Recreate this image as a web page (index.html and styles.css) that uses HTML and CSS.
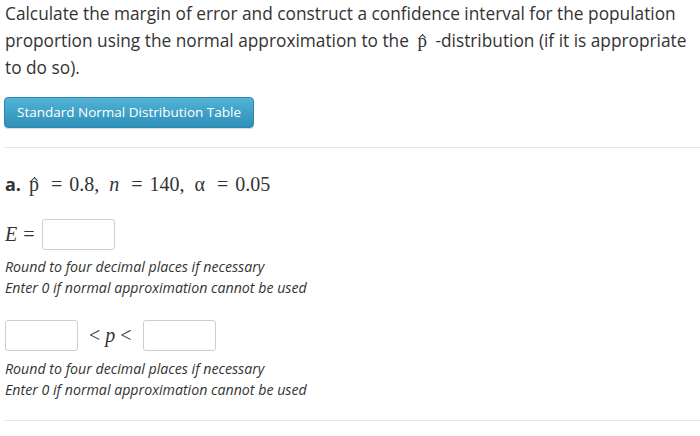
FILE: index.html
```html
<!DOCTYPE html>
<html>
<head>
<meta charset="utf-8">
<link rel="stylesheet" href="styles.css">
</head>
<body>
<div class="page">
  <p class="intro">Calculate the margin of error and construct a confidence interval for the population proportion using the normal approximation to the <span class="math phat"><span class="hat">p</span></span> -distribution (if it is appropriate to do so).</p>
  <div class="btn-row"><button class="btn">Standard Normal Distribution Table</button></div>
  <div class="section">
    <div class="given"><b class="label">a.</b><span class="math expr"><span class="hat">p</span><span class="eq">=</span>0.8,<span class="sp"></span><i>n</i><span class="eq">=</span>140,<span class="sp"></span><span class="sym">α</span><span class="eq">=</span>0.05</span></div>
    <div class="answer-row first">
      <span class="math"><i>E</i><span class="eq small">=</span></span>
      <span class="box"></span>
    </div>
    <div class="hint">Round to four decimal places if necessary<br>Enter 0 if normal approximation cannot be used</div>
    <div class="answer-row second">
      <span class="box"></span>
      <span class="math ineq">&lt;<i class="pv">p</i>&lt;</span>
      <span class="box"></span>
    </div>
    <div class="hint">Round to four decimal places if necessary<br>Enter 0 if normal approximation cannot be used</div>
  </div>
</div>
</body>
</html>
```

FILE: styles.css
```css
html, body {
  margin: 0;
  padding: 0;
  background: #ffffff;
}
.page {
  font-family: "Open Sans", "Noto Sans", sans-serif;
  color: #333333;
  padding-left: 5px;
}
.intro {
  margin: 0;
  font-size: 17.3px;
  line-height: 27px;
}
.math {
  font-family: "Liberation Serif", "DejaVu Serif", serif;
  font-size: 20px;
  color: #333333;
}
.phat {
  margin: 0 4px;
  font-size: 19px;
  line-height: 1;
}
.hat {
  position: relative;
  display: inline-block;
  line-height: 1;
}
.hat::after {
  content: "";
  position: absolute;
  left: 50%;
  top: 0.2em;
  width: 4px;
  height: 4px;
  margin-left: -2.5px;
  border-left: 1px solid #333333;
  border-top: 1px solid #333333;
  transform: rotate(45deg);
}
.btn-row {
  padding-top: 16px;
  line-height: 0;
}
.btn {
  display: inline-block;
  margin-left: -1px;
  width: 250px;
  height: 31px;
  border: 1px solid #2a87ad;
  border-radius: 4px;
  background: linear-gradient(#52b3d6, #2e90b9);
  color: #ffffff;
  font-family: "Open Sans", "Noto Sans", sans-serif;
  font-size: 13.5px;
  line-height: 29px;
  padding: 0;
  box-shadow: 0 1px 1px rgba(0,0,0,0.15);
}
.section {
  margin-top: 19px;
  margin-left: -1px;
  border-top: 1px solid #e6e6e6;
  border-bottom: 1px solid #e6e6e6;
  padding-left: 1px;
  padding-top: 22px;
  height: 274px;
  box-sizing: border-box;
}
.given {
  font-size: 17.5px;
  line-height: 28px;
  display: flex;
  align-items: baseline;
}
.label {
  font-weight: 700;
  font-size: 18px;
  margin-right: 8px;
}
.expr {
  display: inline-flex;
  align-items: baseline;
}
.eq {
  margin: 0 7px 0 12px;
}
.eq.small {
  margin: 0 0 0 6px;
}
.sp {
  display: inline-block;
  width: 10px;
}
.answer-row {
  display: flex;
  align-items: center;
  gap: 7px;
  height: 31px;
}
.answer-row.first {
  margin-top: 21px;
}
.answer-row.second {
  margin-top: 22px;
  gap: 11px;
}
.box {
  display: inline-block;
  width: 73px;
  height: 31px;
  box-sizing: border-box;
  border: 1.5px solid #c5d0dc;
  border-radius: 3px;
  background: #fff;
}
.ineq {
  display: inline-flex;
  align-items: baseline;
}
.pv {
  margin: 0 5px;
}
.hint {
  font-style: italic;
  font-size: 14.2px;
  line-height: 21px;
  margin-top: 6px;
}
.second + .hint {
  margin-top: 7px;
}
```
